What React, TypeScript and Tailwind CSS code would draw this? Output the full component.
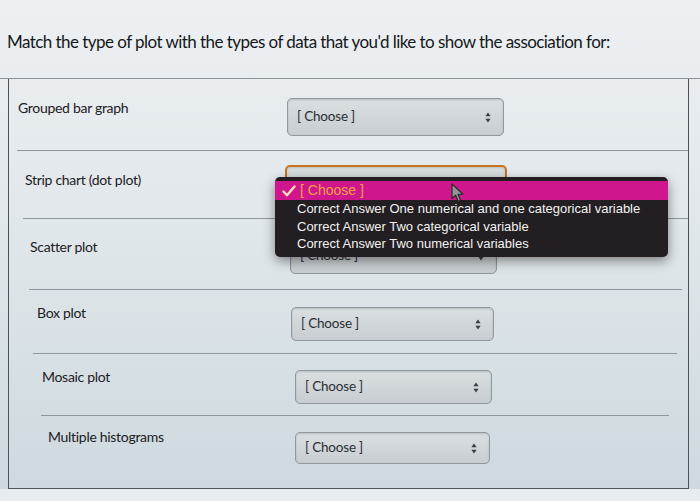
import React from 'react'

type Row = {
  label: string
  rowCls: string
  labelCls: string
  selectCls: string
  focused?: boolean
}

const rows: Row[] = [
  {
    label: 'Grouped bar graph',
    rowCls: 'h-[71px]',
    labelCls: 'ml-[9px] mt-[21px] w-[269px]',
    selectCls: 'mt-[19px] w-[217px] h-[38px]',
  },
  {
    label: 'Strip chart (dot plot)',
    rowCls: 'h-[67px]',
    labelCls: 'ml-[16px] mt-[21px] w-[260px]',
    selectCls: 'mt-[14px] w-[222px] h-[38px]',
    focused: true,
  },
  {
    label: 'Scatter plot',
    rowCls: 'h-[70px]',
    labelCls: 'ml-[21px] mt-[20px] w-[260px]',
    selectCls: 'mt-[18px] w-[207px] h-[37px]',
  },
  {
    label: 'Box plot',
    rowCls: 'h-[63px]',
    labelCls: 'ml-[28px] mt-[15px] w-[254px]',
    selectCls: 'mt-[17px] w-[203px] h-[34px]',
  },
  {
    label: 'Mosaic plot',
    rowCls: 'h-[61px]',
    labelCls: 'ml-[33px] mt-[15px] w-[253px]',
    selectCls: 'mt-[16px] w-[197px] h-[34px]',
  },
  {
    label: 'Multiple histograms',
    rowCls: 'h-[72px]',
    labelCls: 'ml-[39px] mt-[13px] w-[247px]',
    selectCls: 'mt-[16px] w-[195px] h-[32px]',
  },
]

// dividers between rows, inset a bit more as the photo leans
const dividers = [
  'ml-[8px] mr-0',
  'ml-[14px] mr-0',
  'ml-[20px] mr-[6px]',
  'ml-[24px] mr-[11px]',
  'ml-[32px] mr-[19px]',
]

function Arrows() {
  return (
    <svg width="6" height="11" viewBox="0 0 6 11" className="shrink-0">
      <path d="M3 0.5 L5.6 4.3 L0.4 4.3 Z" fill="#3a3f44" />
      <path d="M3 10.5 L5.6 6.7 L0.4 6.7 Z" fill="#3a3f44" />
    </svg>
  )
}

function Select({ className, focused }: { className: string; focused?: boolean }) {
  return (
    <div
      className={`${className} shrink-0 flex items-center justify-between pl-[9px] pr-[12px] rounded-[5px] bg-gradient-to-b from-[#dadfe2] to-[#c7cdd1] shadow-[inset_0_1px_2px_rgba(0,0,0,0.15)] ${
        focused ? 'border-2 border-[#c9741f]' : 'border border-[#8f989e]'
      }`}
    >
      {/* the open menu hides the focused one's label */}
      {!focused && (
        <span className="text-[13.5px] leading-none text-[#2b2f33] tracking-[-0.2px]">[ Choose ]</span>
      )}
      <Arrows />
    </div>
  )
}

function Dropdown() {
  const options = [
    'Correct Answer One numerical and one categorical variable',
    'Correct Answer Two categorical variable',
    'Correct Answer Two numerical variables',
  ]
  return (
    <div
      className="absolute left-[275px] top-[177px] w-[393px] h-[80px] rounded-[5px] bg-[#221e21] shadow-[0_4px_12px_rgba(0,0,0,0.45)] pt-[4px]"
      style={{ fontFamily: '"Liberation Sans", Arial, sans-serif' }}
    >
      <div className="h-[19px] bg-[#d0168d] flex items-center pl-[7px] text-[14px] text-[#f7a23e]">
        <svg width="14" height="12" viewBox="0 0 14 12" className="mr-[4px]">
          <path
            d="M1.5 6.5 L5 10.2 L12.5 1.5"
            fill="none"
            stroke="#ffdcb8"
            strokeWidth="2.4"
            strokeLinecap="round"
            strokeLinejoin="round"
          />
        </svg>
        <span>[ Choose ]</span>
      </div>
      {options.map((o) => (
        <div key={o} className="h-[17.5px] flex items-center pl-[22px] text-[13px] text-[#f2f2f2]">
          {o}
        </div>
      ))}
    </div>
  )
}

function Cursor() {
  return (
    <svg className="absolute left-[451px] top-[183px]" width="14" height="20" viewBox="0 0 14 20">
      <path
        d="M1 1 L1 15.5 L4.6 12.3 L7.2 18.3 L9.6 17.3 L7.1 11.4 L12 11.2 Z"
        fill="#8f9498"
        stroke="#2a2a2a"
        strokeWidth="1.2"
        strokeLinejoin="round"
      />
    </svg>
  )
}

export default function App() {
  return (
    <div
      className="relative w-[700px] h-[501px] overflow-hidden bg-gradient-to-b from-[#edf0f3] via-[#dfe6ea] to-[#cdd8de] text-[#1f2326]"
      style={{ fontFamily: 'Lato, "Open Sans", sans-serif' }}
    >
      <div className="h-[79px] border-b border-[#8b9297] pt-[31px] pl-[7px]">
        <h1 className="text-[17px] leading-[22px] tracking-[-0.55px] font-normal text-[#15181a]">
          Match the type of plot with the types of data that you'd like to show the association for:
        </h1>
      </div>

      <div className="ml-[8px] w-[681px] border-l border-r border-b border-[#4d5459]">
        {rows.map((r, i) => (
          <div key={r.label}>
            <div className={`${r.rowCls} flex items-start`}>
              <div className={`${r.labelCls} shrink-0 text-[14px] leading-[16px] tracking-[-0.3px] text-[#1c2023]`}>
                {r.label}
              </div>
              <Select className={r.selectCls} focused={r.focused} />
            </div>
            {i < dividers.length && <div className={`${dividers[i]} h-px bg-[#8e979c]`} />}
          </div>
        ))}
      </div>

      <div className="h-[12px] bg-[#e6ecef]" />

      <Dropdown />
      <Cursor />
    </div>
  )
}
